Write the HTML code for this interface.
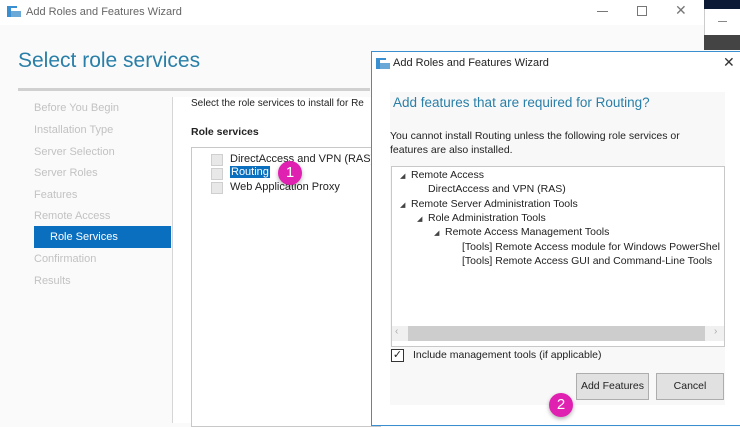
<!DOCTYPE html>
<html><head><style>
*{margin:0;padding:0;box-sizing:border-box}
body{width:740px;height:423px;overflow:hidden;background:#fafafa;font-family:"Liberation Sans",sans-serif;position:relative;color:#222}
.a{position:absolute;white-space:nowrap}
.nav{position:absolute;left:34px;font-size:11px;color:#c2c2c2}
.cb{position:absolute;width:12px;height:12px;background:#e8e8e8;border:1px solid #cfcfcf}
.t{position:absolute;font-size:11px;color:#222;white-space:nowrap}
.badge{position:absolute;width:24px;height:24px;border-radius:50%;background:#e020b0;color:#fff;font-size:15px;text-align:center;line-height:24px;box-shadow:0 2px 4px rgba(0,0,0,.3)}
.tri{font-size:7px;color:#444;position:absolute}
</style></head><body>
<div class="a" style="left:0;top:0;width:740px;height:25px;background:#fff"></div>
<svg class="a" style="left:7px;top:5px" width="14" height="13"><rect x="0" y="1" width="4" height="11" fill="#3a8fd0"/><rect x="4" y="6" width="10" height="6" fill="#6aa8d8"/><rect x="0" y="1" width="10" height="2" fill="#3a8fd0"/></svg>
<div class="a" style="left:26px;top:6px;font-size:11px;color:#666">Add Roles and Features Wizard</div>
<div class="a" style="left:597px;top:11px;width:11px;height:1px;background:#777"></div>
<div class="a" style="left:637px;top:6px;width:10px;height:10px;border:1px solid #777"></div>
<div class="a" style="left:675px;top:2px;font-size:14px;color:#777">✕</div>
<div class="a" style="left:704px;top:0;width:36px;height:9px;background:#0d1a35"></div>
<div class="a" style="left:704px;top:9px;width:36px;height:26px;background:#fff;border-left:1px solid #ccc"></div>
<div class="a" style="left:718px;top:21px;width:9px;height:1px;background:#888"></div>
<div class="a" style="left:704px;top:35px;width:36px;height:15px;background:#444"></div>
<div class="a" style="left:18px;top:49px;font-size:21px;color:#2a7fa8;font-weight:300">Select role services</div>
<div class="a" style="left:18px;top:88px;width:352px;height:3px;background:#d0d0d0"></div>
<div class="a" style="left:172px;top:97px;width:1px;height:326px;background:#d6d6d6"></div>
<div class="a" style="left:173px;top:97px;width:200px;height:326px;background:#fff"></div>
<div class="nav" style="top:102px">Before You Begin</div>
<div class="nav" style="top:124px">Installation Type</div>
<div class="nav" style="top:146px">Server Selection</div>
<div class="nav" style="top:167px">Server Roles</div>
<div class="nav" style="top:189px">Features</div>
<div class="nav" style="top:210px">Remote Access</div>
<div class="a" style="left:34px;top:226px;width:137px;height:22px;background:#0a6fbf"></div>
<div class="nav" style="left:50px;top:231px;color:#fff">Role Services</div>
<div class="nav" style="top:253px">Confirmation</div>
<div class="nav" style="top:275px">Results</div>
<div class="t" style="left:191px;top:98px;font-size:10px">Select the role services to install for Re</div>
<div class="t" style="left:191px;top:126px;font-size:10.5px;font-weight:bold">Role services</div>
<div class="a" style="left:191px;top:147px;width:190px;height:280px;border:1px solid #c8c8c8;background:#fff"></div>
<div class="cb" style="left:211px;top:154px"></div><div class="t" style="left:230px;top:153px">DirectAccess and VPN (RAS)</div>
<div class="cb" style="left:211px;top:168px"></div><div class="t" style="left:230px;top:166px;background:#0a6fbf;color:#fff;padding:0 1px">Routing</div>
<div class="cb" style="left:211px;top:182px"></div><div class="t" style="left:230px;top:181px">Web Application Proxy</div>
<div class="badge" style="left:278px;top:161px">1</div>
<!-- dialog -->
<div class="a" style="left:371px;top:51px;width:372px;height:375px;background:#fff;border:1px solid #3a8fd0"></div>
<svg class="a" style="left:376px;top:57px" width="14" height="13"><rect x="0" y="1" width="4" height="11" fill="#3a8fd0"/><rect x="4" y="6" width="10" height="6" fill="#6aa8d8"/><rect x="0" y="1" width="10" height="2" fill="#3a8fd0"/></svg>
<div class="t" style="left:393px;top:57px">Add Roles and Features Wizard</div>
<div class="a" style="left:723px;top:54px;font-size:14px;color:#333">✕</div>
<div class="a" style="left:390px;top:92px;width:335px;height:313px;background:#f8f8f8"></div>
<div class="a" style="left:393px;top:95px;font-size:13.5px;color:#2a7fa8">Add features that are required for Routing?</div>
<div class="t" style="left:390px;top:129px;font-size:10.5px;line-height:14px">You cannot install Routing unless the following role services or<br>features are also installed.</div>
<div class="a" style="left:391px;top:166px;width:334px;height:181px;background:#fff;border:1px solid #c8c8c8"></div>
<div class="tri" style="left:400px;top:172px">◢</div><div class="t" style="left:411px;top:169px;font-size:10.5px">Remote Access</div>
<div class="t" style="left:428px;top:183px;font-size:10.5px">DirectAccess and VPN (RAS)</div>
<div class="tri" style="left:400px;top:201px">◢</div><div class="t" style="left:411px;top:198px;font-size:10.5px">Remote Server Administration Tools</div>
<div class="tri" style="left:417px;top:215px">◢</div><div class="t" style="left:428px;top:212px;font-size:10.5px">Role Administration Tools</div>
<div class="tri" style="left:434px;top:229px">◢</div><div class="t" style="left:445px;top:226px;font-size:10.5px">Remote Access Management Tools</div>
<div class="t" style="left:462px;top:241px;font-size:10.5px">[Tools] Remote Access module for Windows PowerShel</div>
<div class="t" style="left:462px;top:255px;font-size:10.5px">[Tools] Remote Access GUI and Command-Line Tools</div>
<div class="a" style="left:392px;top:326px;width:332px;height:15px;background:#f0f0f0"></div>
<div class="a" style="left:408px;top:326px;width:297px;height:15px;background:#cdcdcd"></div>
<div class="a" style="left:395px;top:326px;font-size:10px;color:#aaa">‹</div>
<div class="a" style="left:714px;top:326px;font-size:10px;color:#aaa">›</div>
<div class="a" style="left:391px;top:349px;width:13px;height:13px;border:1px solid #333;background:#fff;font-size:11px;line-height:11px;text-align:center">✓</div>
<div class="t" style="left:413px;top:349px;font-size:10.5px">Include management tools (if applicable)</div>
<div class="a" style="left:576px;top:373px;width:73px;height:27px;background:#e1e1e1;border:1px solid #adadad;font-size:10.5px;text-align:center;line-height:25px">Add Features</div>
<div class="a" style="left:656px;top:373px;width:68px;height:27px;background:#e1e1e1;border:1px solid #adadad;font-size:10.5px;text-align:center;line-height:25px">Cancel</div>
<div class="badge" style="left:549px;top:393px">2</div>
</body></html>
